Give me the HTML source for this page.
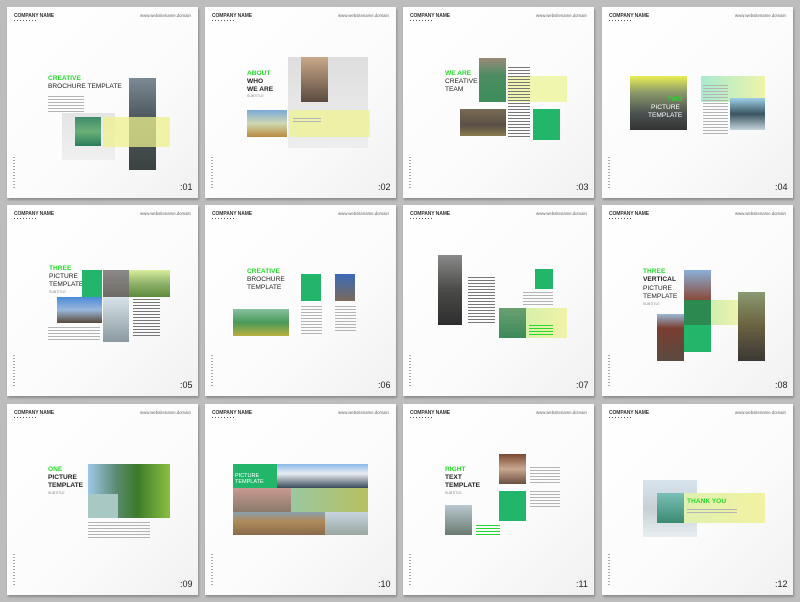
<!DOCTYPE html>
<html><head><meta charset="utf-8"><style>
*{margin:0;padding:0;box-sizing:border-box}
body{width:800px;height:602px;background:#bdbdbd;position:relative;overflow:hidden;font-family:"Liberation Sans",sans-serif}
.p{position:absolute;width:191px;height:191px;background:linear-gradient(135deg,#fff 0%,#fbfbfb 60%,#f1f1f1 100%);box-shadow:1px 2px 2px rgba(0,0,0,.25)}
.cn{position:absolute;left:7px;top:6px;font-size:5px;font-weight:bold;color:#333;letter-spacing:-.1px}
.cn:after{content:"";position:absolute;left:0;top:7px;width:22px;height:1px;background:repeating-linear-gradient(90deg,#555 0 1px,transparent 1px 3px)}
.url{position:absolute;right:8px;top:6px;font-size:4.3px;color:#666}
.num{position:absolute;right:8px;bottom:5px;font-size:9px;color:#222}
.vt{position:absolute;left:5px;top:150px;width:2px;height:33px;background:repeating-linear-gradient(#aaa 0 1px,transparent 1px 3px)}
.a{position:absolute}
.t{position:absolute;font-size:6.6px;font-weight:bold;color:#222;line-height:8px;white-space:nowrap}
.g{color:#26d92b}
.s{position:absolute;font-size:3.5px;color:#888}
.l{position:absolute;background:repeating-linear-gradient(#b4b4b4 0 1px,transparent 1px 3px)}
.ld{position:absolute;background:repeating-linear-gradient(#777 0 1px,transparent 1px 3px)}
.gr{background:#21b66a}
</style></head><body>

<div class="p" style="left:7px;top:7px"></div>
<div class="p" style="left:205px;top:7px"></div>
<div class="p" style="left:403px;top:7px"></div>
<div class="p" style="left:602px;top:7px"></div>
<div class="p" style="left:7px;top:205px"></div>
<div class="p" style="left:205px;top:205px"></div>
<div class="p" style="left:403px;top:205px"></div>
<div class="p" style="left:602px;top:205px"></div>
<div class="p" style="left:7px;top:404px"></div>
<div class="p" style="left:205px;top:404px"></div>
<div class="p" style="left:403px;top:404px"></div>
<div class="p" style="left:602px;top:404px"></div>

<div class="cn" style="left:14px;top:13px">COMPANY NAME</div><div class="url" style="left:140px;top:13px">www.websitename.domain</div><div class="vt" style="left:13px;top:157px"></div><div class="num" style="left:180px;top:182px">:01</div>
<div class="cn" style="left:212px;top:13px">COMPANY NAME</div><div class="url" style="left:338px;top:13px">www.websitename.domain</div><div class="vt" style="left:211px;top:157px"></div><div class="num" style="left:378px;top:182px">:02</div>
<div class="cn" style="left:410px;top:13px">COMPANY NAME</div><div class="url" style="left:536px;top:13px">www.websitename.domain</div><div class="vt" style="left:409px;top:157px"></div><div class="num" style="left:576px;top:182px">:03</div>
<div class="cn" style="left:609px;top:13px">COMPANY NAME</div><div class="url" style="left:735px;top:13px">www.websitename.domain</div><div class="vt" style="left:608px;top:157px"></div><div class="num" style="left:775px;top:182px">:04</div>

<div class="cn" style="left:14px;top:211px">COMPANY NAME</div><div class="url" style="left:140px;top:211px">www.websitename.domain</div><div class="vt" style="left:13px;top:355px"></div><div class="num" style="left:180px;top:380px">:05</div>
<div class="cn" style="left:212px;top:211px">COMPANY NAME</div><div class="url" style="left:338px;top:211px">www.websitename.domain</div><div class="vt" style="left:211px;top:355px"></div><div class="num" style="left:378px;top:380px">:06</div>
<div class="cn" style="left:410px;top:211px">COMPANY NAME</div><div class="url" style="left:536px;top:211px">www.websitename.domain</div><div class="vt" style="left:409px;top:355px"></div><div class="num" style="left:576px;top:380px">:07</div>
<div class="cn" style="left:609px;top:211px">COMPANY NAME</div><div class="url" style="left:735px;top:211px">www.websitename.domain</div><div class="vt" style="left:608px;top:355px"></div><div class="num" style="left:775px;top:380px">:08</div>

<div class="cn" style="left:14px;top:410px">COMPANY NAME</div><div class="url" style="left:140px;top:410px">www.websitename.domain</div><div class="vt" style="left:13px;top:554px"></div><div class="num" style="left:180px;top:579px">:09</div>
<div class="cn" style="left:212px;top:410px">COMPANY NAME</div><div class="url" style="left:338px;top:410px">www.websitename.domain</div><div class="vt" style="left:211px;top:554px"></div><div class="num" style="left:378px;top:579px">:10</div>
<div class="cn" style="left:410px;top:410px">COMPANY NAME</div><div class="url" style="left:536px;top:410px">www.websitename.domain</div><div class="vt" style="left:409px;top:554px"></div><div class="num" style="left:576px;top:579px">:11</div>
<div class="cn" style="left:609px;top:410px">COMPANY NAME</div><div class="url" style="left:735px;top:410px">www.websitename.domain</div><div class="vt" style="left:608px;top:554px"></div><div class="num" style="left:775px;top:579px">:12</div>

<!-- page 1 -->
<div class="t g" style="left:48px;top:75px">CREATIVE</div>
<div class="t" style="left:48px;top:83px;font-weight:normal">BROCHURE TEMPLATE</div>
<div class="l" style="left:48px;top:96px;width:36px;height:17px"></div>
<div class="a" style="left:62px;top:113px;width:53px;height:47px;background:linear-gradient(#e4e4e4,#f0f0f0)"></div>
<div class="a" style="left:75px;top:117px;width:26px;height:29px;background:linear-gradient(#3e8a6a,#6bb078 50%,#2a7d5a)"></div>
<div class="a" style="left:129px;top:78px;width:27px;height:92px;background:linear-gradient(#7c8a95,#505c63 40%,#3b4240)"></div>
<div class="a" style="left:103px;top:117px;width:67px;height:30px;background:rgba(236,240,140,.75)"></div>

<!-- page 2 -->
<div class="t g" style="left:247px;top:70px">ABOUT</div>
<div class="t" style="left:247px;top:78px">WHO</div>
<div class="t" style="left:247px;top:86px">WE ARE</div>
<div class="s" style="left:247px;top:94px">SUBTITLE</div>
<div class="a" style="left:288px;top:57px;width:80px;height:91px;background:linear-gradient(#dedede,#eeeeee)"></div>
<div class="a" style="left:301px;top:57px;width:27px;height:45px;background:linear-gradient(#c9a98a,#5a4a3e)"></div>
<div class="a" style="left:247px;top:110px;width:40px;height:27px;background:linear-gradient(#7aa9d8,#cfd9b0 50%,#b88a3e)"></div>
<div class="a" style="left:290px;top:110px;width:80px;height:27px;background:rgba(236,242,150,.8)"></div>
<div class="l" style="left:293px;top:118px;width:28px;height:6px"></div>

<!-- page 3 -->
<div class="t g" style="left:445px;top:70px">WE ARE</div>
<div class="t" style="left:445px;top:78px;font-weight:normal">CREATIVE</div>
<div class="t" style="left:445px;top:86px;font-weight:normal">TEAM</div>
<div class="a" style="left:479px;top:58px;width:27px;height:44px;background:linear-gradient(#9a8a78,#4c8d60 40%,#3e8d5a)"></div>
<div class="a" style="left:507px;top:76px;width:60px;height:26px;background:rgba(238,244,160,.85)"></div>
<div class="ld" style="left:508px;top:67px;width:22px;height:70px"></div>
<div class="a" style="left:460px;top:109px;width:46px;height:27px;background:linear-gradient(#7a6a55,#5a5045 60%,#8a7a50)"></div>
<div class="a gr" style="left:533px;top:109px;width:27px;height:31px"></div>

<!-- page 4 -->
<div class="a" style="left:630px;top:76px;width:57px;height:54px;background:linear-gradient(#e9ef52,#8c9a6a 30%,#4a5050 70%,#333)"></div>
<div class="t g" style="left:667px;top:96px">TWO</div>
<div class="t" style="left:651px;top:104px;color:#fff;font-weight:normal">PICTURE</div>
<div class="t" style="left:648px;top:112px;color:#fff;font-weight:normal">TEMPLATE</div>
<div class="a" style="left:701px;top:76px;width:64px;height:26px;background:linear-gradient(90deg,#a8ead0,#eef4a8)"></div>
<div class="a" style="left:730px;top:98px;width:35px;height:32px;background:linear-gradient(#9fd0e8,#3a5560 50%,#c4d4dc)"></div>
<div class="l" style="left:703px;top:85px;width:25px;height:50px"></div>

<!-- page 5 -->
<div class="t g" style="left:49px;top:265px">THREE</div>
<div class="t" style="left:49px;top:273px;font-weight:normal">PICTURE</div>
<div class="t" style="left:49px;top:281px;font-weight:normal">TEMPLATE</div>
<div class="s" style="left:49px;top:290px">SUBTITLE</div>
<div class="a gr" style="left:82px;top:270px;width:20px;height:27px"></div>
<div class="a" style="left:103px;top:270px;width:26px;height:27px;background:linear-gradient(#8a8a88,#6e6a66)"></div>
<div class="a" style="left:129px;top:270px;width:41px;height:27px;background:linear-gradient(#d8ef9c,#8fb26a 50%,#5d8a3a)"></div>
<div class="a" style="left:57px;top:297px;width:45px;height:26px;background:linear-gradient(#4a8ad8,#9ab8da 50%,#5a4a3a)"></div>
<div class="a" style="left:103px;top:297px;width:26px;height:45px;background:linear-gradient(#d8e4ea,#8a9aa0)"></div>
<div class="ld" style="left:133px;top:299px;width:27px;height:37px"></div>
<div class="l" style="left:48px;top:327px;width:52px;height:13px"></div>

<!-- page 6 -->
<div class="t g" style="left:247px;top:268px">CREATIVE</div>
<div class="t" style="left:247px;top:276px;font-weight:normal">BROCHURE</div>
<div class="t" style="left:247px;top:284px;font-weight:normal">TEMPLATE</div>
<div class="a gr" style="left:301px;top:274px;width:20px;height:27px"></div>
<div class="a" style="left:335px;top:274px;width:20px;height:27px;background:linear-gradient(#3a6ab8,#7a6a5a)"></div>
<div class="a" style="left:233px;top:309px;width:56px;height:27px;background:linear-gradient(#8ac0a0,#4a9a5a 50%,#b8b040)"></div>
<div class="l" style="left:301px;top:306px;width:21px;height:29px"></div>
<div class="l" style="left:335px;top:306px;width:21px;height:25px"></div>

<!-- page 7 -->
<div class="a" style="left:438px;top:255px;width:24px;height:70px;background:linear-gradient(#8a8a8a,#4a4a48 50%,#2e2e2e)"></div>
<div class="ld" style="left:468px;top:277px;width:27px;height:48px"></div>
<div class="a gr" style="left:535px;top:269px;width:18px;height:20px"></div>
<div class="l" style="left:523px;top:292px;width:30px;height:13px"></div>
<div class="a" style="left:499px;top:308px;width:27px;height:30px;background:linear-gradient(#6aa070,#3d8a58)"></div>
<div class="a" style="left:526px;top:308px;width:41px;height:30px;background:linear-gradient(90deg,#d7f0a8,#f2f2a8)"></div>
<div class="a" style="left:529px;top:325px;width:24px;height:10px;background:repeating-linear-gradient(#26d92b 0 1px,transparent 1px 3px)"></div>

<!-- page 8 -->
<div class="t g" style="left:643px;top:268px">THREE</div>
<div class="t" style="left:643px;top:276px">VERTICAL</div>
<div class="t" style="left:643px;top:285px;font-weight:normal">PICTURE</div>
<div class="t" style="left:643px;top:293px;font-weight:normal">TEMPLATE</div>
<div class="s" style="left:643px;top:302px">SUBTITLE</div>
<div class="a" style="left:684px;top:270px;width:27px;height:30px;background:linear-gradient(#8ab0d8,#8a4a3a)"></div>
<div class="a" style="left:684px;top:300px;width:27px;height:25px;background:#2c8a50"></div>
<div class="a gr" style="left:684px;top:325px;width:27px;height:27px"></div>
<div class="a" style="left:657px;top:314px;width:27px;height:47px;background:linear-gradient(#9ab8d8,#7a3e30 30%,#5a4a40)"></div>
<div class="a" style="left:711px;top:300px;width:27px;height:25px;background:linear-gradient(90deg,#cfeeb0,#eef2b0)"></div>
<div class="a" style="left:738px;top:292px;width:27px;height:69px;background:linear-gradient(#8a9a70,#6a6040 50%,#3a3834)"></div>

<!-- page 9 -->
<div class="t g" style="left:48px;top:466px">ONE</div>
<div class="t" style="left:48px;top:474px">PICTURE</div>
<div class="t" style="left:48px;top:482px">TEMPLATE</div>
<div class="s" style="left:48px;top:491px">SUBTITLE</div>
<div class="a" style="left:88px;top:464px;width:82px;height:54px;background:linear-gradient(90deg,#9ec8e8 0%,#5a8a70 35%,#3d7a2a 60%,#8ac040 100%)"></div>
<div class="a" style="left:88px;top:494px;width:30px;height:24px;background:#a8c8c4"></div>
<div class="l" style="left:88px;top:522px;width:62px;height:16px"></div>

<!-- page 10 -->
<div class="a gr" style="left:233px;top:464px;width:44px;height:24px"></div>
<div class="t" style="left:235px;top:473px;color:#fff;font-weight:normal;font-size:5.5px;line-height:6px">PICTURE<br>TEMPLATE</div>
<div class="a" style="left:277px;top:464px;width:91px;height:24px;background:linear-gradient(#8ab8e8,#e8eef2 40%,#3a4a5a)"></div>
<div class="a" style="left:233px;top:488px;width:58px;height:24px;background:linear-gradient(#c89a90,#8a7a6a)"></div>
<div class="a" style="left:291px;top:488px;width:77px;height:24px;background:linear-gradient(90deg,#9ac8a0,#b8c060)"></div>
<div class="a" style="left:233px;top:512px;width:92px;height:23px;background:linear-gradient(#8aa0b0,#b08a5a 40%,#8a6a4a)"></div>
<div class="a" style="left:325px;top:512px;width:43px;height:23px;background:linear-gradient(#c8d4e0,#9aa8a0)"></div>

<!-- page 11 -->
<div class="t g" style="left:445px;top:466px">RIGHT</div>
<div class="t" style="left:445px;top:474px">TEXT</div>
<div class="t" style="left:445px;top:482px">TEMPLATE</div>
<div class="s" style="left:445px;top:491px">SUBTITLE</div>
<div class="a" style="left:499px;top:454px;width:27px;height:30px;background:linear-gradient(#7a4a30,#c8a890 50%,#6a5040)"></div>
<div class="l" style="left:530px;top:467px;width:30px;height:17px"></div>
<div class="a gr" style="left:499px;top:491px;width:27px;height:30px"></div>
<div class="l" style="left:530px;top:491px;width:30px;height:18px"></div>
<div class="a" style="left:445px;top:505px;width:27px;height:30px;background:linear-gradient(#b8c8d0,#6a7a70)"></div>
<div class="a" style="left:476px;top:525px;width:24px;height:10px;background:repeating-linear-gradient(#26d92b 0 1px,transparent 1px 3px)"></div>

<!-- page 12 -->
<div class="a" style="left:643px;top:480px;width:54px;height:57px;background:linear-gradient(#d8e4ee,#c8d0d4 50%,#e8eef2)"></div>
<div class="a" style="left:657px;top:493px;width:27px;height:30px;background:linear-gradient(#7ac0b8,#3a8a70)"></div>
<div class="a" style="left:684px;top:493px;width:81px;height:30px;background:linear-gradient(90deg,#e0f0b0,#f2f2a0)"></div>
<div class="t g" style="left:687px;top:498px">THANK YOU</div>
<div class="l" style="left:687px;top:509px;width:50px;height:6px"></div>

</body></html>
